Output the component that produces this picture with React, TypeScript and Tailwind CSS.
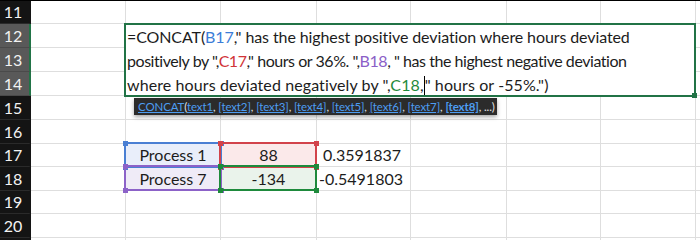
const ROWS = [
  { n: 11, h: 'h-[23px]', sel: false },
  { n: 12, h: 'h-[24px]', sel: true },
  { n: 13, h: 'h-[24px]', sel: true },
  { n: 14, h: 'h-[24px]', sel: true },
  { n: 15, h: 'h-[24px]', sel: false },
  { n: 16, h: 'h-[24px]', sel: false },
  { n: 17, h: 'h-[23px]', sel: false },
  { n: 18, h: 'h-[24px]', sel: false },
  { n: 19, h: 'h-[23px]', sel: false },
  { n: 20, h: 'h-[24px]', sel: false },
  { n: 0, h: 'h-[24px]', sel: false },
];

const COLS = ['w-[95px]', 'w-[95px]', 'w-[96px]', 'w-[94px]', 'w-[96px]', 'w-[94px]', 'w-[95px]', 'w-[20px]'];

const CELLS: Record<string, { text: string; cls: string }> = {
  '17-1': { text: 'Process 1', cls: 'bg-[#e9eefa] justify-center' },
  '18-1': { text: 'Process 7', cls: 'bg-[#efebf7] justify-center' },
  '17-2': { text: '88', cls: 'bg-[#fbe9ea] justify-center' },
  '18-2': { text: '-134', cls: 'bg-[#eaf3eb] justify-center' },
  '17-3': { text: '0.3591837', cls: 'justify-end pr-[9px]' },
  '18-3': { text: '-0.5491803', cls: 'justify-end pr-[7px]' },
};

function RefBox({ pos, border, handle }: { pos: string; border: string; handle: string }) {
  return (
    <div className={`absolute w-[98px] h-[26px] border-2 ${border} ${pos}`}>
      <span className={`absolute -left-[3.5px] -top-[3.5px] w-[5px] h-[5px] ${handle}`} />
      <span className={`absolute -right-[3.5px] -top-[3.5px] w-[5px] h-[5px] ${handle}`} />
      <span className={`absolute -left-[3.5px] -bottom-[3.5px] w-[5px] h-[5px] ${handle}`} />
      <span className={`absolute -right-[3.5px] -bottom-[3.5px] w-[5px] h-[5px] ${handle}`} />
    </div>
  );
}

function Link({ children, bold }: { children: React.ReactNode; bold?: boolean }) {
  return <span className={`text-[#4d9df2] underline underline-offset-[1px] ${bold ? 'font-bold' : ''}`}>{children}</span>;
}

export default function App() {
  return (
    <div className="relative w-[700px] h-[240px] overflow-hidden bg-white font-['Lato','Liberation_Sans',sans-serif] text-[16px] text-[#1c1c1c]">
      <div className="h-px bg-black" />
      {ROWS.map(r => (
        <div key={r.n} className={`flex ${r.h}`}>
          <div
            className={`w-[31px] flex-shrink-0 flex items-center justify-center pr-[3px] border-r-2 border-b text-[#f2f2f2] text-[16px] ${
              r.sel ? 'bg-[#595959] border-r-[#217346] border-b-[#4a4a4a]' : 'bg-[#141414] border-r-[#141414] border-b-[#2a2a2a]'
            }`}
          >
            {r.n || ''}
          </div>
          {COLS.map((w, i) => {
            const c = CELLS[`${r.n}-${i}`];
            return (
              <div key={i} className={`${w} flex-shrink-0 flex items-center border-r border-b border-[#dedede] ${c ? c.cls : ''}`}>
                {c?.text}
              </div>
            );
          })}
        </div>
      ))}

      {/* reference highlights */}
      <RefBox pos="left-[124px] top-[142px]" border="border-[#4a7fd3]" handle="bg-[#4a7fd3]" />
      <RefBox pos="left-[219px] top-[142px]" border="border-[#d2434b]" handle="bg-[#d2434b]" />
      <RefBox pos="left-[124px] top-[165px]" border="border-[#8c62c8]" handle="bg-[#8c62c8]" />
      <RefBox pos="left-[219px] top-[165px]" border="border-[#1e8a3c]" handle="bg-[#1e8a3c]" />

      {/* in-cell formula editor */}
      <div className="absolute left-[124px] top-[23px] w-[572px] h-[74px] border-2 border-[#217346] bg-white pl-[1px] leading-[24px] whitespace-nowrap">
        <div className="tracking-[-0.1px]">
          =CONCAT(<span className="text-[#3b7dd8]">B17</span>," has the highest positive deviation where hours deviated
        </div>
        <div className="tracking-[-0.45px]">
          positively by ",<span className="text-[#d13438]">C17</span>," hours or 36%. ",<span className="text-[#8b5fc7]">B18</span>, " has the highest negative deviation
        </div>
        <div className="tracking-[0.1px]">
          where hours deviated negatively by ",<span className="text-[#1f8a3b]">C18</span>,
          <span className="inline-block w-px h-[19px] bg-black align-[-4px]" />" hours or -55%.")
        </div>
        <span className="absolute -right-[3px] -bottom-[3px] w-[5px] h-[5px] bg-[#217346]" />
      </div>

      {/* function tooltip */}
      <div className="absolute left-[134px] top-[98px] w-[363px] h-[17px] bg-[#2b2b2b] shadow-[0_2px_4px_rgba(0,0,0,0.35)] pl-[4px] text-[11.5px] leading-[17px] text-[#e4e4e4] whitespace-nowrap tracking-[-0.12px]">
        <Link>CONCAT</Link>(<Link>text1</Link>, <Link>[text2]</Link>, <Link>[text3]</Link>, <Link>[text4]</Link>,{' '}
        <Link>[text5]</Link>, <Link>[text6]</Link>, <Link>[text7]</Link>, <Link bold>[text8]</Link>, ...)
      </div>
    </div>
  );
}
